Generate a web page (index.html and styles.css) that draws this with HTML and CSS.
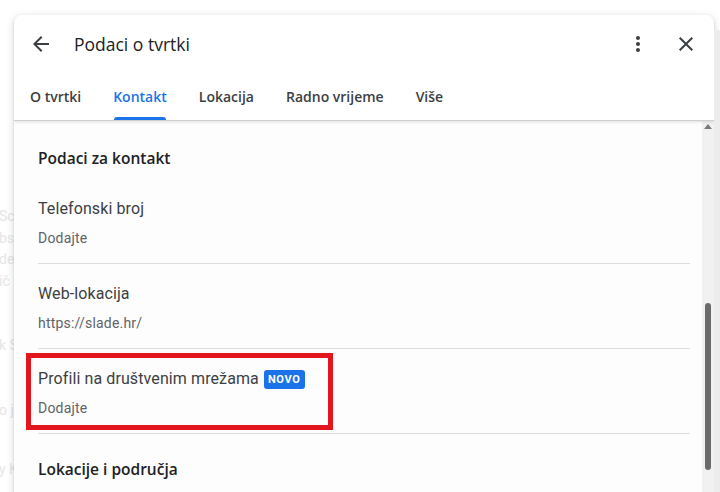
FILE: index.html
```html
<!DOCTYPE html>
<html lang="hr">
<head>
<meta charset="utf-8">
<title>Podaci o tvrtki</title>
<link rel="stylesheet" href="styles.css">
</head>
<body>
<div class="page">
  <div class="behind">
    <div class="ghost g1">Sc</div>
    <div class="ghost">bs</div>
    <div class="ghost">de</div>
    <div class="ghost">ič</div>
    <div class="ghost g2">k S</div>
    <div class="ghost g3">o j</div>
    <div class="ghost g4">y K</div>
  </div>

  <div class="dialog">
    <header class="dlg-header">
      <div class="title-row">
        <button class="icon-btn back" aria-label="Natrag">
          <svg viewBox="0 0 24 24" width="24" height="24"><path d="M20 11H7.83l5.59-5.59L12 4l-8 8 8 8 1.41-1.41L7.83 13H20v-2z"/></svg>
        </button>
        <h1 class="title">Podaci o tvrtki</h1>
        <div class="actions">
          <button class="icon-btn" aria-label="Više opcija">
            <svg viewBox="0 0 24 24" width="24" height="24"><path d="M12 8c1.1 0 2-.9 2-2s-.9-2-2-2-2 .9-2 2 .9 2 2 2zm0 2c-1.1 0-2 .9-2 2s.9 2 2 2 2-.9 2-2-.9-2-2-2zm0 6c-1.1 0-2 .9-2 2s.9 2 2 2 2-.9 2-2-.9-2-2-2z"/></svg>
          </button>
          <button class="icon-btn" aria-label="Zatvori">
            <svg viewBox="0 0 24 24" width="24" height="24"><path d="M19 6.41L17.59 5 12 10.59 6.41 5 5 6.41 10.59 12 5 17.59 6.41 19 12 13.41 17.59 19 19 17.59 13.41 12z"/></svg>
          </button>
        </div>
      </div>
      <nav class="tabs">
        <a class="tab">O tvrtki</a>
        <a class="tab active"><span class="tab-label">Kontakt</span></a>
        <a class="tab">Lokacija</a>
        <a class="tab">Radno vrijeme</a>
        <a class="tab">Više</a>
      </nav>
    </header>

    <div class="body-row">
      <div class="content">
        <section class="section">
          <h2 class="section-title">Podaci za kontakt</h2>
          <div class="item">
            <div class="item-title">Telefonski broj</div>
            <div class="item-sub">Dodajte</div>
          </div>
          <div class="item">
            <div class="item-title">Web-lokacija</div>
            <div class="item-sub">https://slade.hr/</div>
          </div>
          <div class="item">
            <div class="item-title">Profili na društvenim mrežama <span class="badge">NOVO</span></div>
            <div class="item-sub">Dodajte</div>
          </div>
        </section>
        <section class="section">
          <h2 class="section-title">Lokacije i područja</h2>
        </section>
      </div>
      <div class="scrollbar">
        <div class="sb-arrow"></div>
        <div class="sb-thumb"></div>
      </div>
    </div>
  </div>

  <div class="highlight"></div>
  <div class="edge"></div>
</div>
</body>
</html>
```
FILE: styles.css
```css
* { box-sizing: border-box; }

html, body {
  margin: 0;
  padding: 0;
}

body {
  width: 720px;
  height: 492px;
  overflow: hidden;
  background: #ffffff;
  font-family: Roboto, "Liberation Sans", Arial, sans-serif;
  color: #202124;
}

.page {
  position: relative;
  width: 720px;
  height: 492px;
  overflow: hidden;
}

.behind {
  padding-top: 206px;
  display: flex;
  flex-direction: column;
}

.ghost {
  font-size: 14px;
  line-height: 21.5px;
  color: #e6e6e6;
  margin-left: -1px;
  white-space: nowrap;
}
.g2 { margin-top: 43px; }
.g3 { margin-top: 43px; }
.g4 { margin-top: 38px; }

.dialog {
  position: absolute;
  left: 14px;
  top: 15px;
  width: 700px;
  height: 500px;
  background: #ffffff;
  border-radius: 8px 8px 0 0;
  box-shadow: 0 1px 2px rgba(60, 64, 67, 0.25), 0 2px 6px 2px rgba(60, 64, 67, 0.12);
  display: flex;
  flex-direction: column;
  overflow: hidden;
}

.dlg-header {
  position: relative;
  z-index: 1;
  background: #fff;
  border-bottom: 1px solid #cfcfcf;
  box-shadow: 0 1px 3px rgba(0, 0, 0, 0.12);
}

.title-row {
  height: 57px;
  display: flex;
  align-items: center;
  padding: 0 16px 0 15px;
}

.icon-btn {
  width: 24px;
  height: 24px;
  padding: 0;
  border: 0;
  background: none;
  display: flex;
  align-items: center;
  justify-content: center;
}
.icon-btn svg { fill: #3c4043; display: block; }

.title {
  margin: 0 0 0 21px;
  font-family: "Open Sans", Roboto, sans-serif;
  font-weight: 400;
  font-size: 17.5px;
  color: #202124;
  flex: 1;
}

.actions {
  display: flex;
  gap: 24px;
}

.tabs {
  height: 48px;
  display: flex;
}

.tab {
  display: flex;
  align-items: center;
  padding: 0 16px;
  font-family: "Open Sans", Roboto, sans-serif;
  font-size: 14px;
  font-weight: 600;
  letter-spacing: 0;
  color: #3c4043;
}

.tab.active {
  color: #1a73e8;
}

.tab-label {
  height: 100%;
  display: flex;
  align-items: center;
  position: relative;
}
.tab-label::after {
  content: "";
  position: absolute;
  left: 1px;
  right: 1px;
  bottom: 0;
  height: 3px;
  background: #1a73e8;
  border-radius: 3px 3px 0 0;
}

.body-row {
  flex: 1;
  display: flex;
  min-height: 0;
}

.content {
  flex: 1;
  padding: 0 12px 0 24px;
  background: #fdfdfd;
}

.section {
  padding-top: 27px;
}
.section + .section {
  padding-top: 25px;
}

.section-title {
  margin: 0 0 11px 0;
  font-family: "Open Sans", Roboto, sans-serif;
  font-size: 15.5px;
  font-weight: 600;
  line-height: 20px;
  color: #202124;
}

.item {
  padding: 20px 0 15px;
  border-bottom: 1px solid #dadce0;
}

.item-title {
  font-size: 16px;
  line-height: 20px;
  letter-spacing: 0.1px;
  color: #3c4043;
  display: flex;
  align-items: center;
}

.item-sub {
  margin-top: 9px;
  font-size: 14px;
  line-height: 20px;
  letter-spacing: 0.2px;
  color: #5f6368;
}

.badge {
  margin-left: 5px;
  background: #1a73e8;
  color: #fff;
  font-size: 11px;
  font-weight: 700;
  letter-spacing: 0.7px;
  line-height: 19px;
  padding: 0 4px;
  border-radius: 3px;
}

.scrollbar {
  width: 12px;
  background: #f1f1f1;
  display: flex;
  flex-direction: column;
  align-items: center;
}

.sb-arrow {
  margin-top: 3px;
  width: 0;
  height: 0;
  border-left: 4px solid transparent;
  border-right: 4px solid transparent;
  border-bottom: 5px solid #7a7a7a;
}

.sb-thumb {
  margin-top: 174px;
  width: 6px;
  height: 167px;
  background: #6b6b6b;
  border-radius: 3px;
}

.highlight {
  position: absolute;
  left: 26px;
  top: 353px;
  width: 307px;
  height: 77px;
  border: 5px solid #e3161e;
}

.edge {
  position: absolute;
  right: 0;
  top: 30px;
  width: 6px;
  height: 462px;
  background: #ececec;
}
```
